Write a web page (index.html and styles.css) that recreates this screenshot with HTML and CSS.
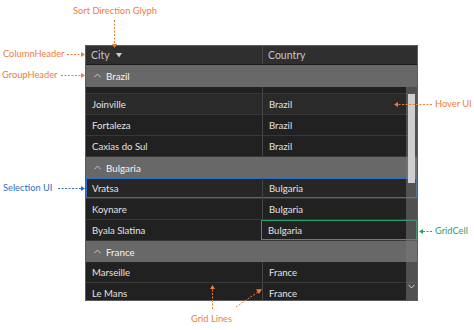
FILE: index.html
```html
<!DOCTYPE html>
<html lang="en">
<head>
  <meta charset="UTF-8">
  <title>DataGrid Anatomy</title>
  <link rel="stylesheet" href="styles.css">
</head>
<body>
  <div class="stage">
    <div class="grid">
      <div class="col-header">
        <div class="hcell c1">
          City
          <svg class="sort-glyph" width="6" height="5" viewBox="0 0 6 5"><polygon points="0,0 6,0 3,4.5" fill="#cfcfcf"/></svg>
        </div>
        <div class="hcell c2">Country</div>
      </div>

      <div class="group group-top">
        <svg class="caret" width="7" height="5" viewBox="0 0 7 5"><polyline points="0.5,4.2 3.5,1 6.5,4.2" fill="none" stroke="#c8c8c8" stroke-width="1"/></svg>
        Brazil
      </div>

      <div class="body">
        <div class="rows">
          <div class="row partial"><div class="cell c1"></div><div class="cell c2"></div></div>
          <div class="row hover"><div class="cell c1">Joinville</div><div class="cell c2">Brazil</div></div>
          <div class="row"><div class="cell c1">Fortaleza</div><div class="cell c2">Brazil</div></div>
          <div class="row"><div class="cell c1">Caxias do Sul</div><div class="cell c2">Brazil</div></div>
          <div class="group">
            <svg class="caret" width="7" height="5" viewBox="0 0 7 5"><polyline points="0.5,4.2 3.5,1 6.5,4.2" fill="none" stroke="#c8c8c8" stroke-width="1"/></svg>
            Bulgaria
          </div>
          <div class="row selected"><div class="cell c1">Vratsa</div><div class="cell c2">Bulgaria</div></div>
          <div class="row"><div class="cell c1">Koynare</div><div class="cell c2">Bulgaria</div></div>
          <div class="row"><div class="cell c1">Byala Slatina</div><div class="cell c2 current">Bulgaria</div></div>
          <div class="group">
            <svg class="caret" width="7" height="5" viewBox="0 0 7 5"><polyline points="0.5,4.2 3.5,1 6.5,4.2" fill="none" stroke="#c8c8c8" stroke-width="1"/></svg>
            France
          </div>
          <div class="row"><div class="cell c1">Marseille</div><div class="cell c2">France</div></div>
          <div class="row"><div class="cell c1">Le Mans</div><div class="cell c2">France</div></div>
        </div>

        <div class="scrollbar">
          <div class="thumb"></div>
          <svg class="scroll-down" width="7" height="5" viewBox="0 0 7 5"><polyline points="0.5,0.8 3.5,4 6.5,0.8" fill="none" stroke="#d0d0d0" stroke-width="1"/></svg>
        </div>
      </div>
    </div>

    <!-- callouts -->
    <span class="label orange sort-label">Sort Direction Glyph</span>
    <span class="label orange colheader-label">ColumnHeader</span>
    <span class="label orange groupheader-label">GroupHeader</span>
    <span class="label orange hover-label">Hover UI</span>
    <span class="label blue selection-label">Selection UI</span>
    <span class="label green gridcell-label">GridCell</span>
    <span class="label orange gridlines-label">Grid Lines</span>

    <svg class="arrows" width="474" height="330" viewBox="0 0 474 330">
      <g stroke="#ef7d3a" stroke-width="1" stroke-dasharray="2 1.5" fill="none">
        <line x1="114.5" y1="20" x2="114.5" y2="44"/>
        <line x1="67" y1="54.5" x2="81" y2="54.5"/>
        <line x1="61" y1="75.5" x2="81" y2="75.5"/>
        <line x1="432" y1="104.5" x2="398" y2="104.5"/>
        <line x1="212.5" y1="309" x2="212.5" y2="289"/>
        <line x1="236" y1="307" x2="258" y2="292"/>
      </g>
      <g fill="#ef7d3a">
        <polygon points="112,44 117,44 114.5,48"/>
        <polygon points="81,52 81,57 85,54.5"/>
        <polygon points="81,73 81,78 85,75.5"/>
        <polygon points="398,102 398,107 394,104.5"/>
        <polygon points="210,289 215,289 212.5,285"/>
        <polygon points="256,289.5 259,294 262,289"/>
      </g>
      <line x1="58" y1="188.5" x2="81" y2="188.5" stroke="#2f6fc4" stroke-width="1" stroke-dasharray="2 1.5"/>
      <polygon points="81,186 81,191 85,188.5" fill="#2f6fc4"/>
      <line x1="432" y1="231.5" x2="423" y2="231.5" stroke="#27a36d" stroke-width="1" stroke-dasharray="2 1.5"/>
      <polygon points="423,229 423,234 419,231.5" fill="#27a36d"/>
    </svg>
  </div>
</body>
</html>
```

FILE: styles.css
```css
:root {
  --orange: #ef7d3a;
  --blue: #2f6fc4;
  --green: #27a36d;
  --grid-border: #5c5c5c;
  --header-bg: #2f2f2f;
  --row-bg: #212121;
  --row-hover: #2a2a2a;
  --row-line: #383838;
  --col-line: #444444;
  --group-bg: #686868;
  --text: #e2e2e2;
  --text-header: #c6c6c6;
}

* {
  margin: 0;
  padding: 0;
  box-sizing: border-box;
}

body {
  background: #ffffff;
  font-family: Lato, "Open Sans", Arial, sans-serif;
}

.stage {
  position: relative;
  width: 474px;
  height: 330px;
  overflow: hidden;
  padding: 45px 0 0 85px;
}

.grid {
  width: 333px;
  border: 1px solid var(--grid-border);
  background-color: var(--row-bg);
  font-size: 9.6px;
  color: var(--text);
}

.col-header {
  display: flex;
  height: 19px;
  background-color: var(--header-bg);
  border-bottom: 1px solid #1b1b1b;
  color: var(--text-header);
  font-size: 10.5px;
}

.hcell {
  display: flex;
  align-items: center;
  gap: 6px;
  padding-left: 5px;
}

.c1 {
  width: 176px;
  flex-shrink: 0;
}

.c2 {
  flex: 1;
  border-left: 1px solid var(--col-line);
}

.col-header .c2 {
  border-left-color: #4a4a4a;
}

.sort-glyph {
  margin-top: 1px;
}

.group {
  display: flex;
  align-items: center;
  gap: 5px;
  height: 21px;
  padding-left: 8px;
  background-color: var(--group-bg);
  color: #f4f4f4;
  font-size: 9.8px;
}

.group-top {
  height: 22px;
}

.caret {
  margin-top: -1px;
}

.body {
  position: relative;
  height: 213px;
  overflow: hidden;
}

.row {
  display: flex;
  height: 21px;
  border-bottom: 1px solid var(--row-line);
}

.row.partial {
  height: 7px;
}

.row.hover {
  background-color: var(--row-hover);
}

.row.selected {
  background-color: #262626;
  box-shadow: inset 0 0 0 1px var(--blue);
}

.cell {
  display: flex;
  align-items: center;
  padding-left: 6px;
}

.cell.current {
  margin-left: -1px;
  border-left: none;
  padding-left: 7px;
  box-shadow: inset 0 0 0 1px var(--green);
}

.scrollbar {
  position: absolute;
  top: 0;
  right: 0;
  bottom: 0;
  width: 11px;
  background-color: rgba(120, 120, 120, 0.55);
  display: flex;
  flex-direction: column;
  align-items: center;
  padding-top: 7px;
}

.thumb {
  width: 7px;
  height: 89px;
  background-color: #cfcfcf;
}

.scroll-down {
  margin-top: auto;
  margin-bottom: 11px;
}

.label {
  position: absolute;
  font-family: Lato, "Open Sans", Arial, sans-serif;
  font-size: 9.3px;
  line-height: 12px;
  white-space: nowrap;
}

.orange { color: var(--orange); }
.blue { color: var(--blue); }
.green { color: var(--green); }

.sort-label { left: 73px; top: 5px; }
.colheader-label { left: 3px; top: 48px; }
.groupheader-label { left: 2px; top: 69px; }
.hover-label { left: 435px; top: 98px; }
.selection-label { left: 3px; top: 182px; }
.gridcell-label { left: 435px; top: 225px; }
.gridlines-label { left: 191px; top: 313px; }

.arrows {
  position: absolute;
  left: 0;
  top: 0;
  pointer-events: none;
}
```
